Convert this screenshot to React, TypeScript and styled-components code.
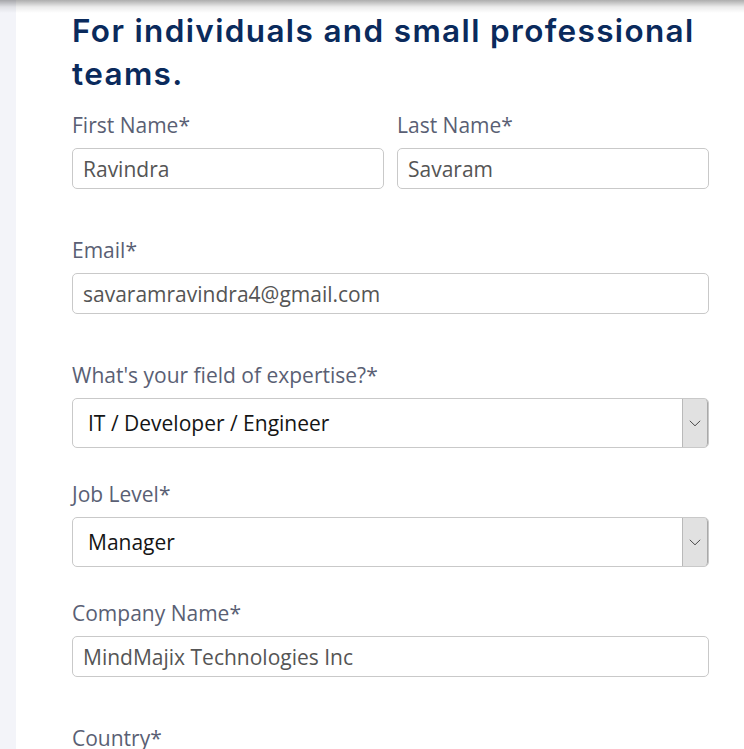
import styled, { createGlobalStyle, css } from "styled-components";

const GlobalStyle = createGlobalStyle`
html, body {
  margin: 0;
  padding: 0;
  background: #ffffff;
}
* {
  box-sizing: border-box;
}
`

const topShade = css`
background-image: linear-gradient(to bottom, rgba(0, 0, 0, 0.32) 0px, rgba(0, 0, 0, 0.08) 7px, rgba(0, 0, 0, 0) 13px);
`

const Page = styled.div`
display: grid;
grid-template-columns: 16px 1fr;
min-height: 749px;
font-family: "Open Sans", "Noto Sans", sans-serif;
`

const SideStrip = styled.div`
background-color: #f3f4f9;
${topShade}
`

const Main = styled.main`
background-color: #ffffff;
${topShade}
padding: 9px 35px 0 56px;
`

const Heading = styled.h1`
margin: 0 0 13px 0;
font-family: Inter, "Noto Sans", sans-serif;
font-weight: 600;
font-size: 31.5px;
letter-spacing: 1.35px;
line-height: 43px;
color: #0a2a5c;
`

const Row = styled.div`
display: grid;
grid-template-columns: 1fr 1fr;
column-gap: 13px;
`

const Field = styled.div<{ $gap: number }>`
display: flex;
flex-direction: column;
margin-bottom: ${p => p.$gap}px;
`

const Label = styled.label`
font-size: 21px;
line-height: 31px;
color: #5a5f74;
padding-top: 2px;
margin-bottom: 7px;
`

const TextInput = styled.input`
height: 41px;
width: 100%;
border: 1px solid #c9c9c9;
border-radius: 5px;
padding: 0 10px;
font-family: "Open Sans", "Noto Sans", sans-serif;
font-size: 21px;
color: #555555;
background: #ffffff;
outline: none;
`

const SelectBox = styled.div`
display: flex;
height: 50px;
border: 1px solid #c9c9c9;
border-radius: 5px;
overflow: hidden;
background: #ffffff;
`

const NativeSelect = styled.select`
flex: 1;
appearance: none;
border: none;
outline: none;
background: transparent;
padding: 0 15px;
font-family: "Open Sans", "Noto Sans", sans-serif;
font-size: 21px;
color: #151515;
`

const ArrowBox = styled.span`
width: 26px;
display: flex;
align-items: center;
justify-content: center;
background: #e1e1e1;
border-left: 1px solid #b9b9b9;
border-right: 1px solid #a9a9a9;
border-radius: 0 4px 4px 0;
`

function Chevron() {
  return (
    <svg width="12" height="7" viewBox="0 0 12 7" fill="none">
      <path d="M0.8 0.8 L6 5.8 L11.2 0.8" stroke="#4a4a4a" strokeWidth="1" />
    </svg>
  )
}

type SelectFieldProps = {
  label: string;
  value: string;
  options: string[];
}

function SelectField({ label, value, options }: SelectFieldProps) {
  return (
    <Field $gap={29}>
      <Label>{label}</Label>
      <SelectBox>
        <NativeSelect defaultValue={value}>
          {options.map(o => <option key={o}>{o}</option>)}
        </NativeSelect>
        <ArrowBox><Chevron /></ArrowBox>
      </SelectBox>
    </Field>
  )
}

export default function App() {
  return (<>
    <GlobalStyle />
    <Page>
      <SideStrip />
      <Main>
        <Heading>For individuals and small professional teams.</Heading>
        <Row>
          <Field $gap={44}>
            <Label>First Name*</Label>
            <TextInput defaultValue="Ravindra" />
          </Field>
          <Field $gap={44}>
            <Label>Last Name*</Label>
            <TextInput defaultValue="Savaram" />
          </Field>
        </Row>
        <Field $gap={44}>
          <Label>Email*</Label>
          <TextInput defaultValue="savaramravindra4@gmail.com" />
        </Field>
        <SelectField
          label="What's your field of expertise?*"
          value="IT / Developer / Engineer"
          options={["IT / Developer / Engineer", "Design / Creative", "Marketing / Sales", "Other"]}
        />
        <SelectField
          label="Job Level*"
          value="Manager"
          options={["Individual Contributor", "Manager", "Director", "Executive"]}
        />
        <Field $gap={44}>
          <Label>Company Name*</Label>
          <TextInput defaultValue="MindMajix Technologies Inc" />
        </Field>
        <Field $gap={0}>
          <Label>Country*</Label>
        </Field>
      </Main>
    </Page>
  </>)
}
